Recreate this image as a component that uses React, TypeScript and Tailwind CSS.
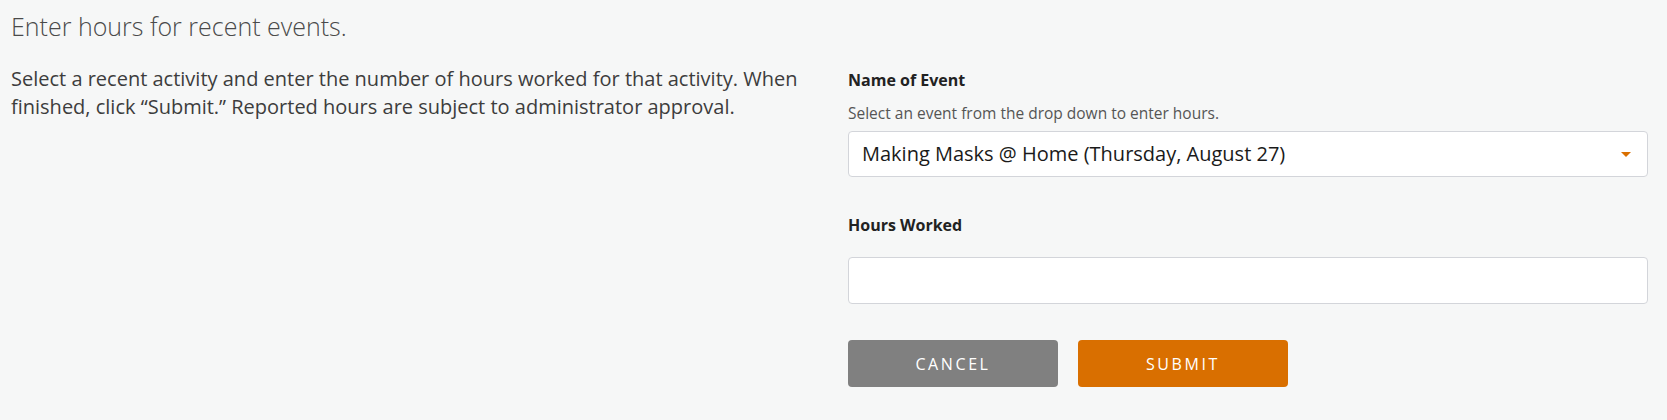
import { useState } from "react";

function CaretDown() {
  return (
    <svg width="10" height="5" viewBox="0 0 10 5" className="shrink-0">
      <path d="M0 0 H10 L5 5 Z" fill="#d96f00" />
    </svg>
  );
}

export default function App() {
  const [hours, setHours] = useState("");

  return (
    <div className="min-h-[420px] w-full bg-[#f6f7f7] pl-[11px] pr-[19px] pt-[10px] font-['Open_Sans',sans-serif]">
      <h1 className="text-[25px] font-light leading-[32px] text-[#4a4a4a]">
        Enter hours for recent events.
      </h1>

      <div className="flex">
        {/* left column: instructions */}
        <div className="w-[837px] shrink-0 pt-[23px] pr-[20px]">
          <p className="text-[20px] leading-[28px] text-[#3d3d3d]">
            Select a recent activity and enter the number of hours worked for
            that activity. When finished, click “Submit.” Reported hours are
            subject to administrator approval.
          </p>
        </div>

        {/* right column: form */}
        <div className="flex-1 pt-[28px]">
          <label className="block text-[16px] font-bold leading-[20px] text-[#222]">
            Name of Event
          </label>
          <p className="mt-[13px] text-[15.5px] leading-[20px] text-[#555]">
            Select an event from the drop down to enter hours.
          </p>
          <div className="mt-[8px] flex h-[46px] items-center justify-between rounded-[4px] border border-[#d3d5da] bg-white pl-[13px] pr-[16px]">
            <span className="text-[20px] text-[#1a1a1a]">
              Making Masks @ Home (Thursday, August 27)
            </span>
            <CaretDown />
          </div>

          <label className="mt-[38px] block text-[16px] font-bold leading-[20px] text-[#222]">
            Hours Worked
          </label>
          <input
            value={hours}
            onChange={(e) => setHours(e.target.value)}
            className="mt-[22px] block h-[47px] w-full rounded-[4px] border border-[#d3d5da] bg-white px-[13px] text-[20px] outline-none"
          />

          <div className="mt-[36px] flex gap-[20px]">
            <button className="h-[47px] w-[210px] rounded-[4px] bg-[#808080] text-[16px] tracking-[2.6px] text-white">
              CANCEL
            </button>
            <button className="h-[47px] w-[210px] rounded-[4px] bg-[#d96f00] text-[16px] tracking-[2.6px] text-white">
              SUBMIT
            </button>
          </div>
        </div>
      </div>
    </div>
  );
}
